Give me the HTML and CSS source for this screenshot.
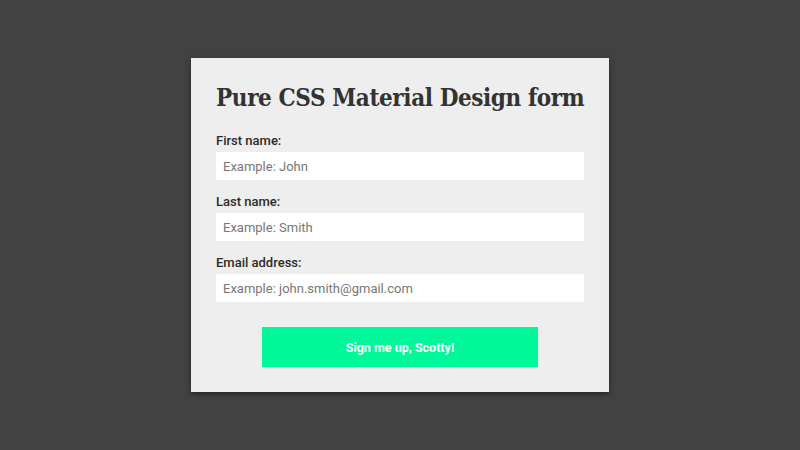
FILE: index.html
```html
<!DOCTYPE html>
<html lang="en">

<head>
    <meta charset="UTF-8">
    <meta name="viewport" content="width=device-width, initial-scale=1.0">
    <title>Material Design Form</title>
    <link rel="stylesheet" href="styles.css">
</head>

<body>
    <form class="card">
        <h1>Pure CSS Material Design form</h1>
        <div class="field">
            <label for="firstName">First name:</label>
            <input type="text" id="firstName" placeholder="Example: John">
        </div>
        <div class="field">
            <label for="lastName">Last name:</label>
            <input type="text" id="lastName" placeholder="Example: Smith">
        </div>
        <div class="field">
            <label for="email">Email address:</label>
            <input type="email" id="email" placeholder="Example: john.smith@gmail.com">
        </div>
        <button type="button">Sign me up, Scotty!</button>
    </form>
</body>

</html>
```

FILE: styles.css
```css
* {
    margin: 0;
    padding: 0;
    box-sizing: border-box;
    font-family: Roboto, "Liberation Sans", sans-serif;
}

body {
    height: 450px;
    background: #424242;
    display: flex;
    justify-content: center;
    align-items: center;
}

.card {
    width: 418px;
    padding: 26px 25px 25px;
    background: #eeeeee;
    box-shadow: 0 2px 5px rgba(0, 0, 0, 0.45);
    display: flex;
    flex-direction: column;
}

h1 {
    font-family: "DejaVu Serif Condensed", "DejaVu Serif", serif;
    font-stretch: condensed;
    font-size: 24px;
    line-height: 28px;
    font-weight: bold;
    letter-spacing: -0.4px;
    color: #333;
    white-space: nowrap;
    margin-bottom: 20px;
}

.field {
    display: flex;
    flex-direction: column;
    margin-bottom: 13px;
}

label {
    font-size: 13px;
    line-height: 17px;
    font-weight: 500;
    color: #2b2b2b;
    margin-bottom: 3px;
}

input {
    height: 28px;
    border: none;
    outline: none;
    background: #fff;
    padding: 0 7px;
    font-size: 13px;
    color: #333;
}

input::placeholder {
    color: #777;
}

button {
    align-self: center;
    width: 276px;
    height: 40px;
    margin-top: 12px;
    background: #00f79a;
    color: #fff;
    border: none;
    font-size: 12.5px;
    font-weight: bold;
}
```
